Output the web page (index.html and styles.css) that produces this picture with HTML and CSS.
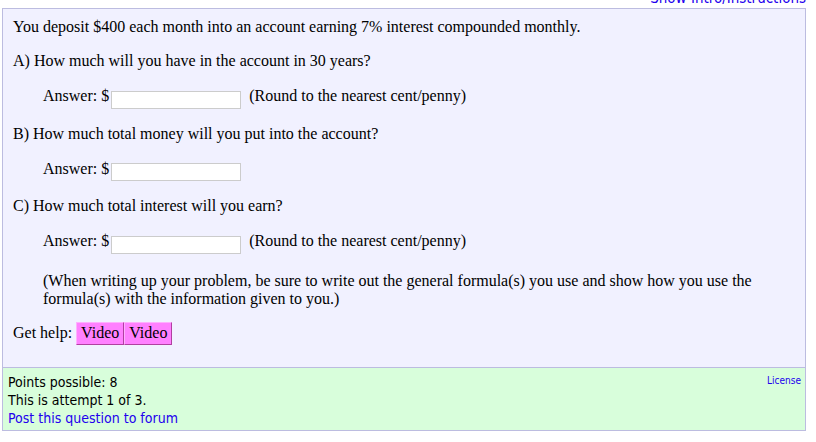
FILE: index.html
```html
<!DOCTYPE html>
<html>
<head>
<meta charset="utf-8">
<link rel="stylesheet" href="styles.css">
</head>
<body>
<div class="intro"><a href="#" class="intro-link">Show Intro/Instructions</a></div>
<div class="question">
  <p>You deposit $400 each month into an account earning 7% interest compounded monthly.</p>
  <p>A) How much will you have in the account in 30 years?</p>
  <p class="answer">Answer: $<input type="text" class="ans-input"> (Round to the nearest cent/penny)</p>
  <p>B) How much total money will you put into the account?</p>
  <p class="answer">Answer: $<input type="text" class="ans-input"></p>
  <p>C) How much total interest will you earn?</p>
  <p class="answer">Answer: $<input type="text" class="ans-input"> (Round to the nearest cent/penny)</p>
  <p class="note">(When writing up your problem, be sure to write out the general formula(s) you use and show how you use the formula(s) with the information given to you.)</p>
  <p class="help">Get help: <span class="btn">Video</span><span class="btn">Video</span></p>
</div>
<div class="footer">
  <a href="#" class="license">License</a>
  <div>Points possible: 8</div>
  <div>This is attempt 1 of 3.</div>
  <div><a href="#" class="forum">Post this question to forum</a></div>
</div>
</body>
</html>
```
FILE: styles.css
```css
html, body {
  margin: 0;
  padding: 0;
  background: #ffffff;
}
body {
  font-family: "Liberation Serif", "Times New Roman", serif;
  font-size: 16px;
  color: #000;
}
.intro {
  text-align: right;
  margin: -11px 10px 0 0;
  height: 19px;
  line-height: 18px;
  font-family: "DejaVu Sans Condensed", "DejaVu Sans", sans-serif;
  font-size: 15px;
}
.intro-link {
  color: #2200ee;
  text-decoration: none;
}
.question {
  margin: 0 10px 0 2px;
  border: 1px solid #bcbce0;
  background: #f1f1ff;
  padding: 9px 10px 6px 10px;
}
.question p {
  margin: 0 0 16px 0;
  line-height: 18px;
}
.question p.answer {
  line-height: 20px;
}
.answer,
.note {
  padding-left: 30px;
}
.question p.note {
  margin-top: 18px;
  line-height: 18px;
}
.question p.help {
  margin-top: -2px;
  margin-bottom: 16px;
}
.ans-input {
  width: 126px;
  height: 14px;
  padding: 1px;
  margin: 0 4px 0 2px;
  border: 1px solid #cccccc;
  background: #ffffff;
  vertical-align: -3px;
  font-size: 13px;
}
.btn {
  display: inline-block;
  background: #ff80ff;
  border: 1px solid;
  border-color: #ffb0ff #b040a0 #b040a0 #ffb0ff;
  padding: 1px 4px 2px 4px;
  line-height: 18px;
}
.footer {
  margin: 0 10px 0 2px;
  border: 1px solid #bcbce0;
  border-top: none;
  background: #d8fedb;
  padding: 5px 4px 3px 5px;
  font-family: "DejaVu Sans Condensed", "DejaVu Sans", sans-serif;
  font-size: 14px;
  line-height: 18px;
}
.license {
  float: right;
  margin-top: 1px;
  font-size: 10px;
  line-height: 14px;
  color: #2200ee;
  text-decoration: none;
}
.forum {
  color: #2200ee;
  text-decoration: none;
}
```
